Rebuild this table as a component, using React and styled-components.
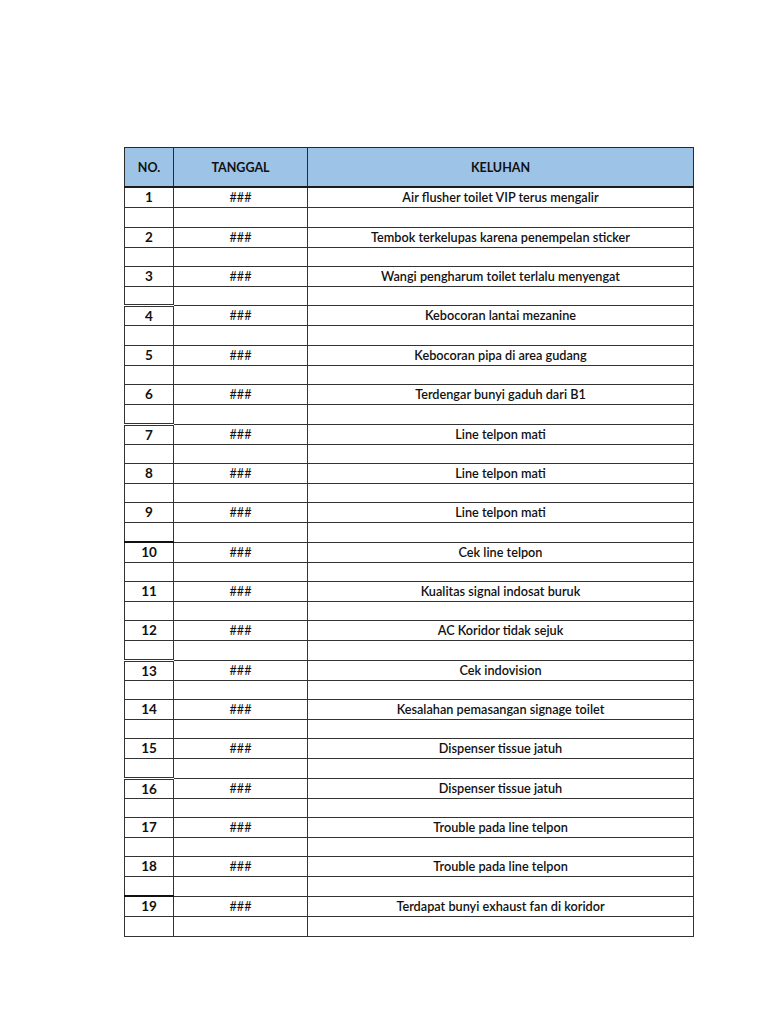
import React from "react";
import styled, { createGlobalStyle } from "styled-components";

const Global = createGlobalStyle`
  html, body { margin: 0; padding: 0; background: #fff; }
  body { font-family: Lato, "Open Sans", "Liberation Sans", sans-serif; color: #111; }
`;

const Page = styled.div`
  width: 768px;
  height: 1024px;
  padding: 147px 0 0 124px;
  box-sizing: border-box;
`;

const Table = styled.table`
  border-collapse: collapse;
  width: 569px;
  table-layout: fixed;
`;

const Col = styled.col`
  width: ${(p) => p.$w}px;
`;

const HeadCell = styled.th`
  background: #9dc3e6;
  height: 38px;
  padding: 0;
  border: 1px solid #2a2a2a;
  border-bottom: 2px solid #1a1a1a;
  font-size: 12.5px;
  font-weight: 700;
  text-align: center;
  vertical-align: middle;
`;

const Row = styled.tr`
  height: ${(p) => p.$h}px;
`;

const Cell = styled.td`
  padding: 0;
  border: 1px solid #333;
  font-size: ${(p) => p.$size || 12.7}px;
  line-height: 14px;
  text-align: center;
  vertical-align: middle;
  font-weight: ${(p) => p.$weight || 400};
  white-space: nowrap;
  ${(p) => p.$top === "double" && `border-top: 3px double #333;`}
  ${(p) => p.$top === "thick" && `border-top: 2px solid #111;`}
`;

const data = [
  "Air flusher toilet VIP terus mengalir",
  "Tembok terkelupas karena penempelan sticker",
  "Wangi pengharum toilet terlalu menyengat",
  "Kebocoran lantai mezanine",
  "Kebocoran pipa di area gudang",
  "Terdengar bunyi gaduh dari B1",
  "Line telpon mati",
  "Line telpon mati",
  "Line telpon mati",
  "Cek line telpon",
  "Kualitas signal indosat buruk",
  "AC Koridor tidak sejuk",
  "Cek indovision",
  "Kesalahan pemasangan signage toilet",
  "Dispenser tissue jatuh",
  "Dispenser tissue jatuh",
  "Trouble pada line telpon",
  "Trouble pada line telpon",
  "Terdapat bunyi exhaust fan di koridor",
];

const blankHeights = [20, 19, 19, 20, 19, 20, 19, 19, 20, 19, 19, 20, 19, 19, 20, 19, 19, 20, 20];

const topStyle = { 4: "double", 7: "double", 10: "thick", 13: "double", 16: "double", 19: "thick" };

export default function App() {
  return (
    <>
      <Global />
      <Page>
        <Table>
          <colgroup>
            <Col $w={49} />
            <Col $w={134} />
            <Col $w={386} />
          </colgroup>
          <thead>
            <tr>
              <HeadCell>NO.</HeadCell>
              <HeadCell>TANGGAL</HeadCell>
              <HeadCell>KELUHAN</HeadCell>
            </tr>
          </thead>
          <tbody>
            {data.map((k, i) => (
              <React.Fragment key={i}>
                <Row $h={20}>
                  <Cell $weight={700} $size={13.5} $top={topStyle[i + 1]}>{i + 1}</Cell>
                  <Cell>###</Cell>
                  <Cell $weight={600}>{k}</Cell>
                </Row>
                <Row $h={blankHeights[i]}>
                  <Cell />
                  <Cell />
                  <Cell />
                </Row>
              </React.Fragment>
            ))}
          </tbody>
        </Table>
      </Page>
    </>
  );
}
